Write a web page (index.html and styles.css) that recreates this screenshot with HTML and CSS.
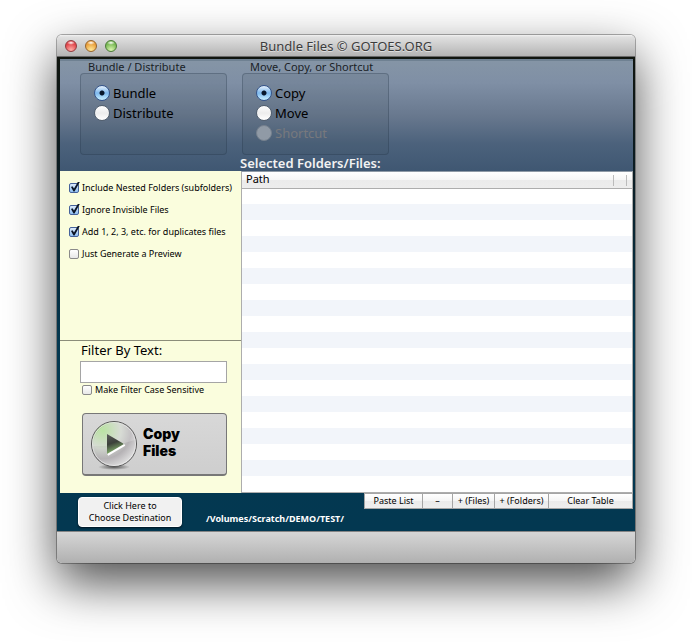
FILE: index.html
```html
<!DOCTYPE html>
<html lang="en">
<head>
<meta charset="utf-8">
<title>Bundle Files</title>
<link rel="stylesheet" href="styles.css">
</head>
<body>
<main class="window">
  <header class="titlebar">
    <div class="lights">
      <button class="light red" aria-label="Close"></button>
      <button class="light amber" aria-label="Minimize"></button>
      <button class="light green" aria-label="Zoom"></button>
    </div>
    <h1 class="title">Bundle Files © GOTOES.ORG</h1>
  </header>

  <div class="content">
    <section class="options">
      <div class="group" role="radiogroup" aria-labelledby="mode-title">
        <div class="group-title" id="mode-title">Bundle / Distribute</div>
        <div class="group-box">
          <label class="choice"><input type="radio" name="mode" checked>Bundle</label>
          <label class="choice"><input type="radio" name="mode">Distribute</label>
        </div>
      </div>
      <div class="group" role="radiogroup" aria-labelledby="action-title">
        <div class="group-title" id="action-title">Move, Copy, or Shortcut</div>
        <div class="group-box">
          <label class="choice"><input type="radio" name="action" checked>Copy</label>
          <label class="choice"><input type="radio" name="action">Move</label>
          <label class="choice off"><input type="radio" name="action" disabled>Shortcut</label>
        </div>
        <h2 class="list-title">Selected Folders/Files:</h2>
      </div>
    </section>

    <div class="middle">
      <aside class="side">
        <div class="checks">
          <label class="check"><input type="checkbox" checked>Include Nested Folders (subfolders)</label>
          <label class="check"><input type="checkbox" checked>Ignore Invisible Files</label>
          <label class="check"><input type="checkbox" checked>Add 1, 2, 3, etc. for duplicates files</label>
          <label class="check"><input type="checkbox">Just Generate a Preview</label>
        </div>
        <div class="filter">
          <label class="filter-title" for="filter">Filter By Text:</label>
          <input class="filter-input" id="filter" type="text">
          <label class="check"><input type="checkbox">Make Filter Case Sensitive</label>
          <button class="run">
            <svg width="50" height="52" viewBox="0 0 50 52" aria-hidden="true">
              <defs>
                <radialGradient id="disc" cx="0.25" cy="0.2" r="0.9">
                  <stop offset="0" stop-color="#a9dc8c"/>
                  <stop offset="0.45" stop-color="#ced3cb"/>
                  <stop offset="0.7" stop-color="#b5b2b5"/>
                  <stop offset="1" stop-color="#e4e4e4"/>
                </radialGradient>
                <linearGradient id="arrow" x1="0" y1="0" x2="0.3" y2="1">
                  <stop offset="0" stop-color="#5a5a5a"/>
                  <stop offset="0.5" stop-color="#3c413a"/>
                  <stop offset="1" stop-color="#8abb70"/>
                </linearGradient>
                <radialGradient id="ground">
                  <stop offset="0" stop-color="#555"/>
                  <stop offset="1" stop-color="#555" stop-opacity="0"/>
                </radialGradient>
              </defs>
              <ellipse cx="25" cy="48" rx="16" ry="3" fill="url(#ground)"/>
              <circle cx="25" cy="25" r="22.5" fill="url(#disc)" stroke="#555" stroke-width="1"/>
              <circle cx="25" cy="25" r="21.5" fill="none" stroke="#f4f4f4" stroke-opacity=".6"/>
              <path d="M4 27Q24 28 46 21Q43 5 25 4Q6 6 4 27Z" fill="#fff" fill-opacity=".2"/>
              <path d="M18.500 35.500L35.500 25.500" stroke="#fff" stroke-width="3"/>
              <path d="M18 15L35 25L18 35Z" fill="url(#arrow)"/>
            </svg>
            <span>Copy<br>Files</span>
          </button>
        </div>
      </aside>
      <div class="list">
        <table>
          <thead><tr><th>Path</th><th class="tick" aria-label="Type"></th><th class="tick" aria-label="Status"></th></tr></thead>
          <tbody>
            <tr><td colspan="3"></td></tr><tr><td colspan="3"></td></tr>
            <tr><td colspan="3"></td></tr><tr><td colspan="3"></td></tr>
            <tr><td colspan="3"></td></tr><tr><td colspan="3"></td></tr>
            <tr><td colspan="3"></td></tr><tr><td colspan="3"></td></tr>
            <tr><td colspan="3"></td></tr><tr><td colspan="3"></td></tr>
            <tr><td colspan="3"></td></tr><tr><td colspan="3"></td></tr>
            <tr><td colspan="3"></td></tr><tr><td colspan="3"></td></tr>
            <tr><td colspan="3"></td></tr><tr><td colspan="3"></td></tr>
            <tr><td colspan="3"></td></tr><tr><td colspan="3"></td></tr>
            <tr><td colspan="3"></td></tr>
          </tbody>
        </table>
      </div>
    </div>

    <div class="actions">
      <button class="destination">Click Here to<br>Choose Destination</button>
      <output class="path">/Volumes/Scratch/DEMO/TEST/</output>
      <div class="tools">
        <button class="paste">Paste List</button>
        <button class="remove">–</button>
        <button class="files">+ (Files)</button>
        <button class="folders">+ (Folders)</button>
        <button class="clear">Clear Table</button>
      </div>
    </div>
  </div>

  <footer class="statusbar"></footer>
</main>
</body>
</html>
```
FILE: styles.css
```css
* {
  box-sizing: border-box;
}

body {
  margin: 0;
  padding: 35px 57px 79px;
  background: #fff;
  font-family: "Lucida Grande", "Noto Sans", sans-serif;
  font-size: 13px;
  color: #000;
}

button,
input {
  margin: 0;
  font: inherit;
  color: inherit;
}

.window {
  border-radius: 5px;
  box-shadow: 0 0 0 1px rgba(0, 0, 0, 0.3), 0 20px 50px rgba(0, 0, 0, 0.7);
}

/* Title bar */
.titlebar {
  display: grid;
  grid-template-columns: 1fr auto 1fr;
  align-items: center;
  height: 22px;
  padding: 0 8px;
  border-radius: 5px 5px 0 0;
  border-bottom: 1px solid #686868;
  background: linear-gradient(#f2f2f2, #e0e0e0 2px, #b4b4b4);
}

.lights {
  display: flex;
  gap: 8px;
}

.light {
  width: 12px;
  height: 12px;
  padding: 0;
  border: 1px solid;
  border-radius: 50%;
}

.red {
  border-color: #923b3e;
  background: radial-gradient(ellipse 4px 2px at 50% 18%, #fff, transparent), radial-gradient(circle at 50% 90%, #ffb0a8, #e2464b 65%);
}

.amber {
  border-color: #96642b;
  background: radial-gradient(ellipse 4px 2px at 50% 18%, #fff, transparent), radial-gradient(circle at 50% 90%, #ffea98, #eaa03c 65%);
}

.green {
  border-color: #4b7a38;
  background: radial-gradient(ellipse 4px 2px at 50% 18%, #fff, transparent), radial-gradient(circle at 50% 90%, #dbf7b0, #79b954 65%);
}

.title {
  margin: 0;
  font-size: 13px;
  line-height: 20px;
  font-weight: 400;
  color: #3c3c3c;
  text-shadow: 0 1px 0 rgba(255, 255, 255, 0.5);
}

/* Content frame */
.content {
  padding: 2px 2px 0 3px;
  background: linear-gradient(#10150f, #0b1d24 25%, #043850 60%, #033851);
}

.options {
  display: flex;
  gap: 15px;
  height: 112px;
  padding: 0 20px;
  border-top: 2px solid #6f8192;
  background: linear-gradient(#8595a6, #7f8fa5 20%, #68788e 50%, #4c627c 75%, #3f5772);
}

.group {
  width: 147px;
}

.group-title {
  padding-left: 8px;
  font-size: 11px;
  line-height: 11px;
  white-space: nowrap;
  color: #1a1f26;
}

.group-box {
  height: 82px;
  margin-top: 1px;
  padding: 9px 13px;
  border: 1px solid rgba(30, 45, 65, 0.28);
  border-radius: 4px;
  background: rgba(60, 70, 80, 0.12);
}

.choice {
  display: flex;
  align-items: center;
  gap: 3px;
  height: 20px;
}

.choice.off {
  color: #78797d;
}

.choice input {
  appearance: none;
  width: 16px;
  height: 16px;
  border: 1px solid #53606f;
  border-radius: 50%;
  background: linear-gradient(#fff, #ededed 50%, #fff);
}

.choice input:checked {
  border-color: #35558c;
  background: radial-gradient(circle, #08172b 2px, transparent 3px), linear-gradient(#e6f1fc, #7db8ee 50%, #c9f0ff);
}

.choice input:disabled {
  border-color: #76818e;
  background: #909aa6;
}

.list-title {
  margin: 0 0 0 -2px;
  font-size: 13px;
  line-height: 16px;
  font-weight: 600;
  white-space: nowrap;
  color: #f2f2f2;
}

/* Side panel and list */
.middle {
  display: flex;
}

.side {
  display: flex;
  flex-direction: column;
  width: 181px;
  background: #fafddd;
}

.checks {
  display: flex;
  flex-direction: column;
  gap: 10px;
  height: 170px;
  padding: 11px 0 0 9px;
  border-bottom: 1px solid #8b8d7a;
}

.check {
  display: flex;
  align-items: center;
  gap: 3px;
  font-size: 9px;
  line-height: 12px;
  white-space: nowrap;
}

.check input {
  appearance: none;
  flex: none;
  width: 10px;
  height: 10px;
  border: 1px solid #8a8a8a;
  border-radius: 2px;
  background: linear-gradient(#fff, #e8e8e8);
}

.check input:checked {
  position: relative;
  border-color: #45629b;
  background: linear-gradient(#dceafa, #8fc0f2);
}

.check input:checked::after {
  content: "";
  position: absolute;
  left: 0;
  top: -2px;
  width: 10px;
  height: 10px;
  background: #0b1424;
  clip-path: polygon(10% 50%, 25% 42%, 40% 65%, 78% 0, 98% 0, 45% 95%, 35% 95%);
}

.filter {
  padding: 0 14px 0 20px;
}

.filter-title {
  display: block;
  padding: 0 1px 2px;
  line-height: 18px;
}

.filter-input {
  display: block;
  width: 100%;
  height: 22px;
  border: 1px solid #a5a5a5;
  background: #fff;
}

.filter .check {
  padding: 1px 2px 2px;
}

.run {
  display: flex;
  align-items: center;
  gap: 4px;
  width: 145px;
  height: 63px;
  margin: 15px 0 0 2px;
  padding: 2px 6px 0;
  border: 1px solid #777;
  border-bottom-width: 2px;
  border-radius: 4px;
  background: linear-gradient(#d8d8d8, #cecece);
  font-family: "Arial Black", Inter, sans-serif;
  font-size: 14px;
  font-weight: 900;
  line-height: 17px;
  text-align: left;
}

.run span {
  padding-bottom: 6px;
}

.list {
  flex: 1;
  border: 1px solid #adadad;
  border-top-color: #8f9aa6;
  background: #fff;
}

table {
  width: 100%;
  border-collapse: collapse;
  table-layout: fixed;
}

th {
  height: 16px;
  padding: 0 4px;
  border-bottom: 1px solid #adadad;
  background: linear-gradient(#fff, #f6f6f6 50%, #ebebeb 51%, #ededed);
  font-size: 11px;
  line-height: 14px;
  font-weight: 400;
  text-align: left;
  vertical-align: top;
}

.tick {
  width: 13px;
  background: linear-gradient(#bbb, #bbb) 0 3px / 1px 11px no-repeat, linear-gradient(#fff, #f6f6f6 50%, #ebebeb 51%, #ededed);
}

.tick:last-child {
  width: 6px;
  padding: 0;
}

td {
  height: 16px;
  padding: 0;
}

tbody tr:nth-child(even) {
  background: #f2f5fa;
}

/* Bottom actions */
.actions {
  display: flex;
  align-items: flex-start;
  height: 38px;
  padding-left: 18px;
}

.destination {
  width: 104px;
  height: 30px;
  margin-top: 4px;
  padding: 0;
  border: 1px solid #fff;
  border-radius: 4px;
  background: #f1f1f1;
  box-shadow: 0 1px 2px #001420;
  font-size: 9px;
  line-height: 12px;
}

.path {
  margin: 20px 0 0 24px;
  font-size: 9px;
  line-height: 12px;
  font-weight: 700;
  color: #fff;
}

.tools {
  display: flex;
  margin-left: auto;
  border-left: 1px solid #a5a5a5;
}

.tools button {
  height: 16px;
  padding: 0;
  border: 1px solid #a5a5a5;
  border-left-width: 0;
  background: linear-gradient(#fff, #f5f5f5 50%, #ebebeb 51%, #eee);
  font-size: 9px;
  line-height: 14px;
  white-space: nowrap;
}

.tools .paste {
  width: 58px;
}

.tools .remove {
  width: 30px;
}

.tools .files {
  width: 42px;
}

.tools .folders {
  width: 54px;
}

.tools .clear {
  width: 84px;
}

.statusbar {
  height: 32px;
  border-top: 1px solid #858585;
  border-radius: 0 0 5px 5px;
  background: linear-gradient(#d6d6d6, #b0b0b0);
}
```
